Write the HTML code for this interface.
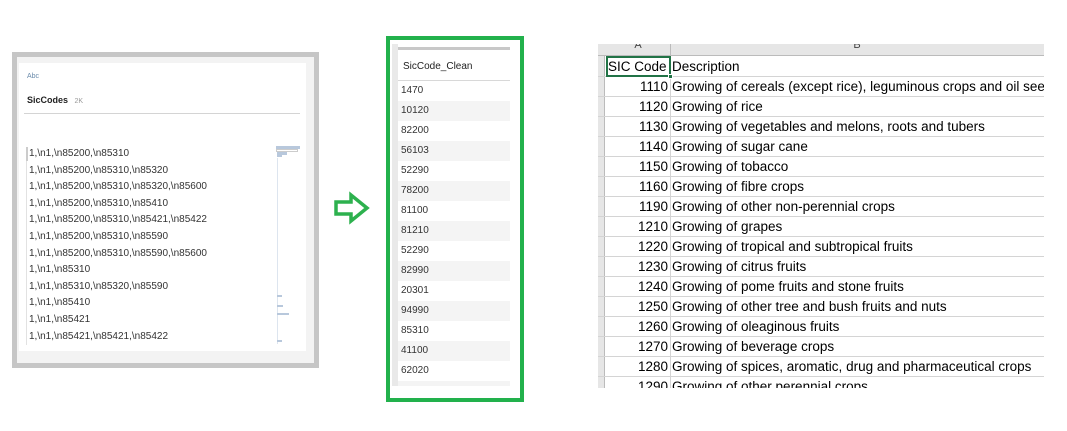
<!DOCTYPE html>
<html><head><meta charset="utf-8"><style>
*{margin:0;padding:0;box-sizing:border-box}
body{width:1067px;height:431px;background:#fff;position:relative;overflow:hidden;font-family:"Liberation Sans",sans-serif}
.a{position:absolute}
</style></head><body>
<!-- left panel -->
<div class="a" style="left:12px;top:52px;width:307px;height:316px;border:5px solid #c6c6c6;background:#f3f3f3"></div>
<div class="a" style="left:19px;top:63px;width:287px;height:288px;background:#fff"></div>
<div class="a" style="left:27px;top:73px;font-size:7px;color:#6a8bab">Abc</div>
<div class="a" style="left:27px;top:95px;font-size:9px;font-weight:bold;color:#222">SicCodes <span style="font-weight:normal;color:#999;font-size:7px;margin-left:4px">2K</span></div>
<div class="a" style="left:24px;top:113px;width:276px;height:1px;background:#d4d4d4"></div>
<div class="a" style="left:26px;top:147px;width:1px;height:198px;background:#e2e2e2"></div>
<div class="a" style="left:26px;top:147px;width:2px;height:14px;background:#ccc"></div>
<div class="a" style="left:29px;top:146px;font-size:10px;line-height:16.6px;color:#333;white-space:pre">1,\n1,\n85200,\n85310
1,\n1,\n85200,\n85310,\n85320
1,\n1,\n85200,\n85310,\n85320,\n85600
1,\n1,\n85200,\n85310,\n85410
1,\n1,\n85200,\n85310,\n85421,\n85422
1,\n1,\n85200,\n85310,\n85590
1,\n1,\n85200,\n85310,\n85590,\n85600
1,\n1,\n85310
1,\n1,\n85310,\n85320,\n85590
1,\n1,\n85410
1,\n1,\n85421
1,\n1,\n85421,\n85421,\n85422</div>
<div class="a" style="left:276px;top:146px;width:24px;height:3px;background:#b8c8dc"></div>
<div class="a" style="left:276px;top:149px;width:22px;height:3px;border:1px solid #ccc"></div>
<div class="a" style="left:277px;top:152px;width:10px;height:3px;background:#b8c8dc"></div>
<div class="a" style="left:277px;top:155px;width:5px;height:2px;background:#b8c8dc"></div>
<div class="a" style="left:277px;top:158px;width:1px;height:186px;background:#dde5ef"></div>
<div class="a" style="left:277px;top:295px;width:5px;height:2px;background:#b8c8dc"></div>
<div class="a" style="left:277px;top:313px;width:12px;height:2px;background:#b8c8dc"></div>
<div class="a" style="left:277px;top:305px;width:6px;height:2px;background:#b8c8dc"></div>
<div class="a" style="left:277px;top:340px;width:5px;height:2px;background:#b8c8dc"></div>
<!-- arrow -->
<svg class="a" style="left:333px;top:191px" width="40" height="34" viewBox="0 0 40 34"><path d="M3 11H18V4L34 17L18 30V23H3Z" fill="none" stroke="#2db14e" stroke-width="3.5" stroke-linejoin="miter"/></svg>
<!-- middle -->
<div class="a" style="left:386px;top:36px;width:138px;height:366px;border:4px solid #22b14c;background:#fff"></div>
<div class="a" style="left:392px;top:44px;width:6px;height:342px;background:#e9e9e9"></div>
<div class="a" style="left:398px;top:47px;width:112px;height:3px;background:#c8c8c8"></div>
<div class="a" style="left:403px;top:61px;font-size:10px;color:#222">SicCode_Clean</div>
<div class="a" style="left:398px;top:80px;width:112px;height:1px;background:#d8d8d8"></div>
<div class="a" style="left:398px;top:81px;width:112px;font-size:10px;color:#333">
<div style="height:20px;line-height:20px;padding-left:3px">1470</div>
<div style="height:20px;line-height:20px;padding-left:3px;background:#f4f4f4">10120</div>
<div style="height:20px;line-height:20px;padding-left:3px">82200</div>
<div style="height:20px;line-height:20px;padding-left:3px;background:#f4f4f4">56103</div>
<div style="height:20px;line-height:20px;padding-left:3px">52290</div>
<div style="height:20px;line-height:20px;padding-left:3px;background:#f4f4f4">78200</div>
<div style="height:20px;line-height:20px;padding-left:3px">81100</div>
<div style="height:20px;line-height:20px;padding-left:3px;background:#f4f4f4">81210</div>
<div style="height:20px;line-height:20px;padding-left:3px">52290</div>
<div style="height:20px;line-height:20px;padding-left:3px;background:#f4f4f4">82990</div>
<div style="height:20px;line-height:20px;padding-left:3px">20301</div>
<div style="height:20px;line-height:20px;padding-left:3px;background:#f4f4f4">94990</div>
<div style="height:20px;line-height:20px;padding-left:3px">85310</div>
<div style="height:20px;line-height:20px;padding-left:3px;background:#f4f4f4">41100</div>
<div style="height:20px;line-height:20px;padding-left:3px">62020</div>
<div style="height:5px;background:#f4f4f4"></div>
</div>
<!-- excel -->
<div class="a" style="left:598px;top:44px;width:446px;height:344px;overflow:hidden;font-size:13.5px;color:#000">
<div class="a" style="left:0;top:0;width:7px;height:344px;background:#e6e6e6;border-right:1px solid #bbb"></div>
<div class="a" style="left:0;top:0;width:446px;height:12px;background:#e6e6e6;border-bottom:1px solid #bbb"></div>
<div class="a" style="left:8px;top:-5px;width:64px;text-align:center;font-size:11px;color:#444">A</div>
<div class="a" style="left:72px;top:0;width:1px;height:12px;background:#bbb"></div>
<div class="a" style="left:72px;top:-5px;width:374px;text-align:center;font-size:11px;color:#444">B</div>
<div class="a" style="left:72px;top:12px;width:1px;height:340px;background:#d4d4d4"></div>
<div id="rows"></div>
<div class="a" style="left:8px;top:12px;width:65px;height:21px;border:2px solid #217346"></div>
<div class="a" style="left:70px;top:30px;width:5px;height:5px;background:#217346;border:1px solid #fff"></div>
</div>
<script>
var d=[["SIC Code","Description",1],["1110","Growing of cereals (except rice), leguminous crops and oil seeds"],["1120","Growing of rice"],["1130","Growing of vegetables and melons, roots and tubers"],["1140","Growing of sugar cane"],["1150","Growing of tobacco"],["1160","Growing of fibre crops"],["1190","Growing of other non-perennial crops"],["1210","Growing of grapes"],["1220","Growing of tropical and subtropical fruits"],["1230","Growing of citrus fruits"],["1240","Growing of pome fruits and stone fruits"],["1250","Growing of other tree and bush fruits and nuts"],["1260","Growing of oleaginous fruits"],["1270","Growing of beverage crops"],["1280","Growing of spices, aromatic, drug and pharmaceutical crops"],["1290","Growing of other perennial crops"]];
var h="";for(var i=0;i<d.length;i++){var t=12+i*20;
h+='<div class="a" style="left:0;top:'+(t+20)+'px;width:446px;height:1px;background:#d4d4d4"></div>';
if(d[i][2])h+='<div class="a" style="left:10px;top:'+(t+3)+'px">'+d[i][0]+'</div>';
else h+='<div class="a" style="left:8px;width:62px;text-align:right;top:'+(t+3)+'px">'+d[i][0]+'</div>';
h+='<div class="a" style="left:74px;top:'+(t+3)+'px;white-space:nowrap">'+d[i][1]+'</div>';}
document.getElementById('rows').outerHTML=h;
</script>
</body></html>
